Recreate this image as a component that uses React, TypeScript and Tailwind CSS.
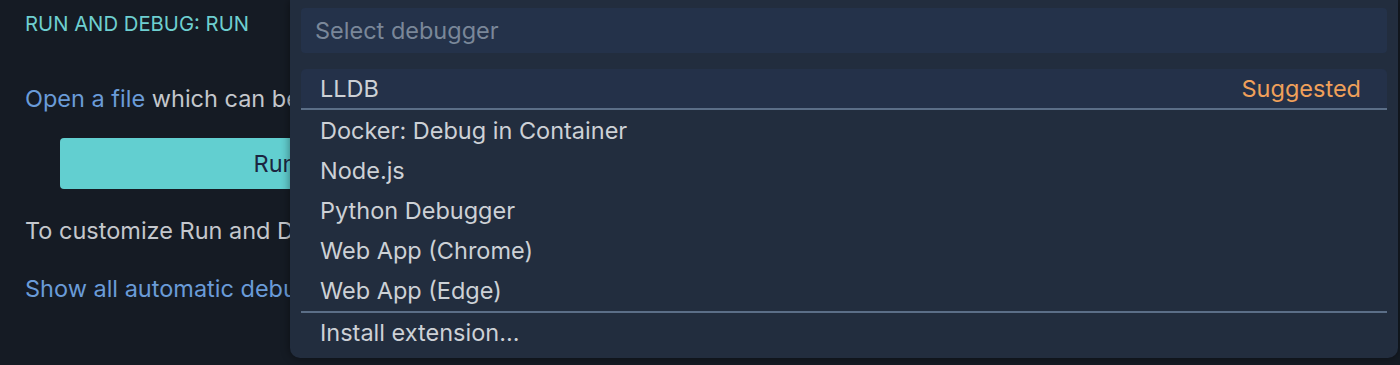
import React from 'react';

const debuggers = [
  'Docker: Debug in Container',
  'Node.js',
  'Python Debugger',
  'Web App (Chrome)',
  'Web App (Edge)',
];

export default function App() {
  return (
    <div
      className="relative w-[1400px] h-[365px] overflow-hidden bg-[#151b24] text-[#cdd1d6]"
      style={{ fontFamily: 'Inter, "Noto Sans", sans-serif' }}
    >
      {/* sidebar behind the quick pick, clipped where the overlay starts */}
      <div className="w-[290px] overflow-hidden">
        <div className="w-[678px] px-[25px]">
          <div className="h-[48px] flex items-center text-[20.3px] text-[#6ecfd0]">
            RUN AND DEBUG: RUN
          </div>
          <p className="mt-[37px] text-[23.5px] leading-[28px] whitespace-nowrap text-[#c4c7cc]">
            <span className="text-[#6a9bd8]">Open a file</span> which can be debugged or run.
          </p>
          <div className="mt-[25px] mx-[35px] h-[51px] rounded-[4px] bg-[#62cfd0] flex items-center justify-center text-[23.5px] text-[#1c2540]">
            Run and Debug
          </div>
          <p className="mt-[28px] text-[23.5px] leading-[28px] whitespace-nowrap text-[#c4c7cc]">
            To customize Run and Debug create a launch.json file.
          </p>
          <p className="mt-[30px] text-[23.5px] leading-[28px] whitespace-nowrap text-[#6a9bd8]">
            Show all automatic debug configurations.
          </p>
        </div>
      </div>

      {/* quick pick overlay */}
      <div className="absolute left-[290px] top-0 w-[1108px] h-[358px] rounded-b-[10px] bg-[#222d3e] px-[11px] pt-[8px] shadow-[0_0_10px_rgba(0,0,0,0.45)]">
        <div className="h-[45px] rounded-[4px] bg-[#24324a] flex items-center px-[14px] text-[23.5px] text-[#7a8799]">
          Select debugger
        </div>
        <div className="mt-[16px]">
          <div className="h-[39px] rounded-t-[5px] bg-[#243149] flex items-center justify-between pl-[19px] pr-[26px] text-[23.5px]">
            <span>LLDB</span>
            <span className="text-[#f0a05a]">Suggested</span>
          </div>
          <div className="h-[2px] bg-[#5b6e87]" />
          <div className="pt-[1px]">
            {debuggers.map((d) => (
              <div key={d} className="h-[40px] flex items-center pl-[19px] text-[23.5px]">
                {d}
              </div>
            ))}
          </div>
          <div className="h-[2px] bg-[#5b6e87]" />
          <div className="h-[40px] flex items-center pl-[19px] text-[23.5px]">Install extension...</div>
        </div>
      </div>
    </div>
  );
}
